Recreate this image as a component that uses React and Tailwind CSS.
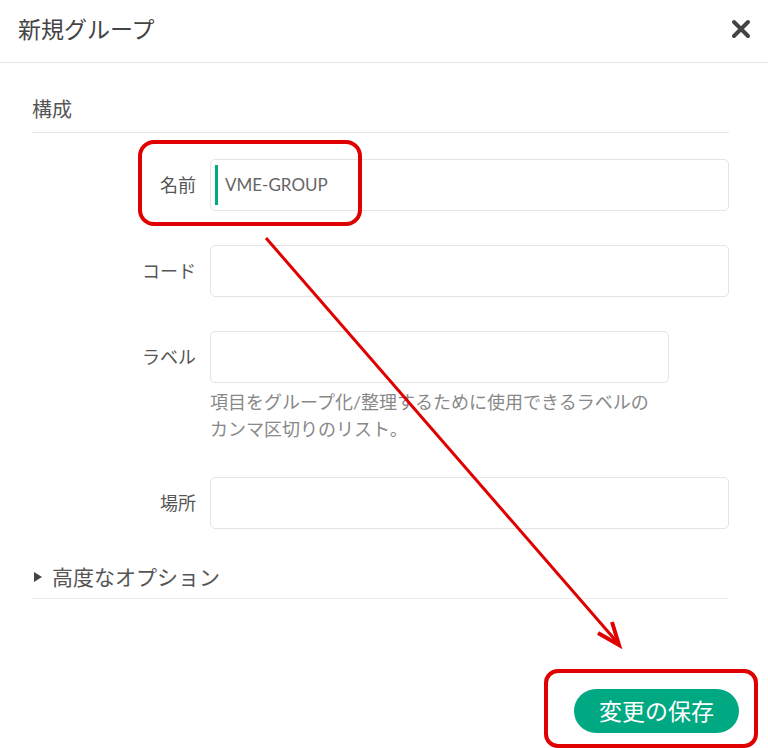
import React from 'react';

const font = { fontFamily: 'Lato, "Noto Sans CJK JP", sans-serif' };

function Field({ label, width = 'w-[519px]', children, help }) {
  return (
    <div className="flex items-start">
      <div className="w-[178px] h-[52px] flex items-center justify-end pr-[14px] text-[18px] text-[#555]">
        {label}
      </div>
      <div className="flex flex-col">
        <div className={`${width} h-[52px] border border-[#e4e4e4] rounded-[5px] bg-white flex items-center`}>
          {children}
        </div>
        {help && (
          <p className="mt-[6px] text-[18px] leading-[27px] text-[#888] w-[480px]">{help}</p>
        )}
      </div>
    </div>
  );
}

export default function App() {
  return (
    <div className="relative w-[768px] h-[748px] bg-white overflow-hidden" style={font}>
      {/* Header */}
      <div className="h-[63px] flex items-center justify-between pl-[18px] pr-[16px] border-b border-[#e6e6e6]">
        <h2 className="text-[23px] text-[#444] -mt-[4px]">新規グループ</h2>
        <svg width="22" height="22" viewBox="0 0 22 22" className="-mt-[4px]">
          <path d="M4 4 L18 18 M18 4 L4 18" stroke="#444" strokeWidth="4" strokeLinecap="round" />
        </svg>
      </div>

      {/* Body */}
      <div className="pl-[32px] pr-[39px]">
        <div className="pt-[33px] pb-[9px] border-b border-[#e6e6e6] text-[20px] leading-[27px] text-[#555]">構成</div>

        <div className="pt-[26px] flex flex-col gap-[34px]">
          <Field label="名前">
            <span className="ml-[4px] w-[3px] h-[40px] bg-[#01a982]" />
            <span className="ml-[7px] text-[17px] text-[#666]">VME-GROUP</span>
          </Field>
          <Field label="コード" />
          <Field
            label="ラベル"
            width="w-[459px]"
            help={<>項目をグループ化/整理するために使用できるラベルの<br />カンマ区切りのリスト。</>}
          />
          <Field label="場所" />
        </div>

        <div className="mt-[35px] pb-[8px] border-b border-[#ececec] flex items-center gap-[9px]">
          <svg width="10" height="12" viewBox="0 0 10 12" className="ml-[1px]">
            <path d="M1 1 L9 6 L1 11 Z" fill="#444" />
          </svg>
          <span className="text-[21px] leading-[26px] text-[#555]">高度なオプション</span>
        </div>

        <div className="flex justify-end mt-[90px] -mr-[10px]">
          <button className="w-[165px] h-[44px] rounded-full bg-[#01a982] text-white text-[23px] leading-none">
            変更の保存
          </button>
        </div>
      </div>

      {/* Annotations */}
      <svg className="absolute inset-0 pointer-events-none" width="768" height="748">
        <rect x="140" y="142" width="220" height="82" rx="14" fill="none" stroke="#e00000" strokeWidth="4" />
        <rect x="546" y="671" width="210" height="75" rx="12" fill="none" stroke="#e00000" strokeWidth="4" />
        <line x1="266" y1="238" x2="617" y2="642" stroke="#e00000" strokeWidth="3" />
        <polyline points="598,633 619,645 612,622" fill="none" stroke="#e00000" strokeWidth="4" strokeLinejoin="miter" />
      </svg>
    </div>
  );
}
